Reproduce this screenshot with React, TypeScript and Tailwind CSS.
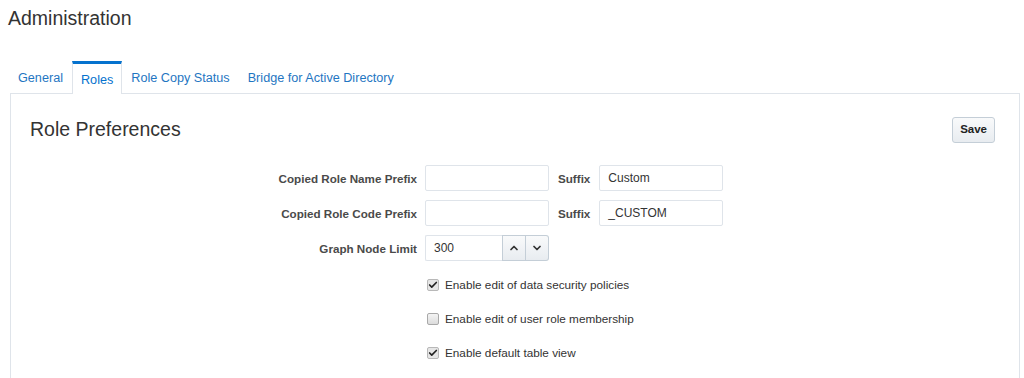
import { Check, ChevronDown, ChevronUp } from "lucide-react";

const font = { fontFamily: '"Liberation Sans", Arial, sans-serif' };

function TextInput({ value = "", width = "w-[124px]" }: { value?: string; width?: string }) {
  return (
    <div
      className={`flex h-[26px] ${width} items-center rounded-[2px] border border-[#dfe4ea] bg-white pl-[8px] text-[12px] text-[#333]`}
    >
      {value}
    </div>
  );
}

function Checkbox({ checked, label }: { checked: boolean; label: string }) {
  return (
    <div className="flex items-center leading-[16px]">
      <span
        className={`flex h-[12px] w-[12px] items-center justify-center rounded-[2px] border ${
          checked ? "border-[#b8b8b8] bg-[#e6e6e6]" : "border-[#a9a9a9] bg-gradient-to-b from-[#f4f4f4] to-[#dcdcdc]"
        }`}
      >
        {checked && <Check className="h-[10px] w-[10px] text-[#222]" strokeWidth={4} />}
      </span>
      <span className="ml-[6px] text-[11.75px] text-[#333]">{label}</span>
    </div>
  );
}

function Row({ label, children }: { label: string; children: React.ReactNode }) {
  return (
    <div className="flex items-center">
      <div className="w-[406px] text-right text-[11.65px] font-bold text-[#4a4a4a]">{label}</div>
      <div className="ml-[8px] flex items-center">{children}</div>
    </div>
  );
}

export default function App() {
  const tabs = ["General", "Roles", "Role Copy Status", "Bridge for Active Directory"];

  return (
    <div className="h-[378px] overflow-hidden bg-white" style={font}>
      <h1 className="pl-[8px] pt-[6px] text-[19.5px] leading-[24px] text-[#333]">Administration</h1>

      <div className="mt-[31px] flex pl-[9px]">
        {tabs.map((tab) =>
          tab === "Roles" ? (
            <div
              key={tab}
              className="relative z-10 -mb-px flex h-[33px] items-center border-x border-t-[3px] border-x-[#dfe4ea] border-t-[#0572ce] bg-white px-[8px] pt-[2px] text-[12.65px] text-[#0572ce]"
            >
              {tab}
            </div>
          ) : (
            <div key={tab} className="flex h-[32px] items-center px-[9px] pt-[3px] text-[12.65px] text-[#1f76c2]">
              {tab}
            </div>
          )
        )}
      </div>

      <div className="ml-[10px] mr-[4px] h-[300px] border border-[#dfe4ea]">
        <div className="flex items-center justify-between pl-[19px] pr-[24px] pt-[21px]">
          <h2 className="text-[19.5px] text-[#333]">Role Preferences</h2>
          <button className="h-[26px] rounded-[3px] border border-[#c4ced7] bg-gradient-to-b from-[#f9fafb] to-[#e8ecf0] px-[7px] text-[11.5px] font-bold text-[#222]">
            Save
          </button>
        </div>

        <div className="mt-[21px] flex flex-col gap-[9px]">
          <Row label="Copied Role Name Prefix">
            <TextInput />
            <span className="ml-[9px] mr-[9px] text-[11.65px] font-bold text-[#4a4a4a]">Suffix</span>
            <TextInput value="Custom" />
          </Row>
          <Row label="Copied Role Code Prefix">
            <TextInput />
            <span className="ml-[9px] mr-[9px] text-[11.65px] font-bold text-[#4a4a4a]">Suffix</span>
            <TextInput value="_CUSTOM" />
          </Row>
          <Row label="Graph Node Limit">
            <div className="flex h-[26px]">
              <div className="flex w-[77px] items-center rounded-l-[2px] border border-r-0 border-[#dfe4ea] bg-white pl-[8px] text-[12px] text-[#333]">
                300
              </div>
              <div className="flex w-[24px] items-center justify-center border border-[#c4ced7] bg-gradient-to-b from-[#f9fafb] to-[#e8ecf0]">
                <ChevronUp className="h-[12px] w-[12px] text-[#333]" strokeWidth={3.5} />
              </div>
              <div className="flex w-[23px] items-center justify-center rounded-r-[3px] border border-l-0 border-[#c4ced7] bg-gradient-to-b from-[#f9fafb] to-[#e8ecf0]">
                <ChevronDown className="h-[12px] w-[12px] text-[#333]" strokeWidth={3.5} />
              </div>
            </div>
          </Row>
        </div>

        <div className="mt-[16px] flex flex-col gap-[18px] pl-[416px]">
          <Checkbox checked label="Enable edit of data security policies" />
          <Checkbox checked={false} label="Enable edit of user role membership" />
          <Checkbox checked label="Enable default table view" />
        </div>
      </div>
    </div>
  );
}
